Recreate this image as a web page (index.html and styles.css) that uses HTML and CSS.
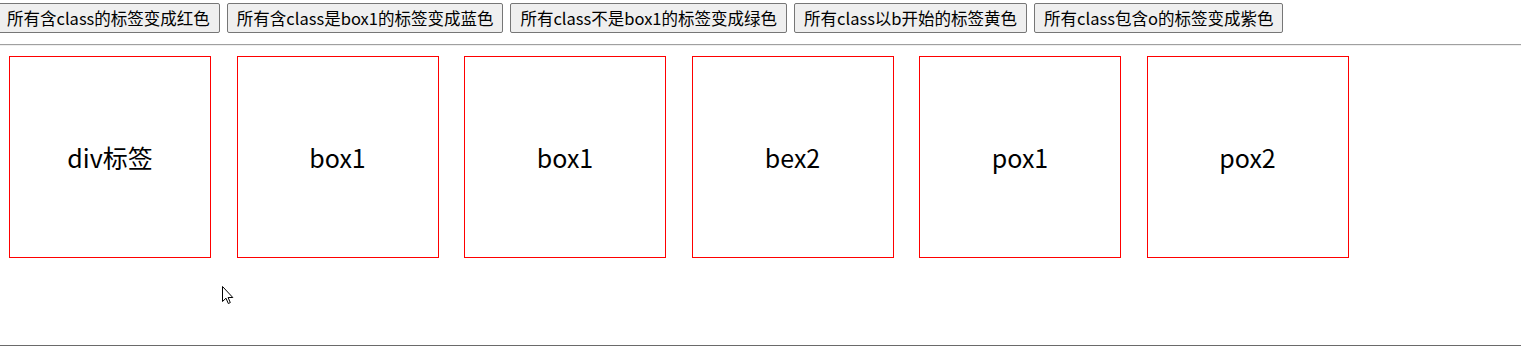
FILE: index.html
```html
<!DOCTYPE html>
<html lang="zh">
<head>
<meta charset="utf-8">
<title>选择器</title>
<link rel="stylesheet" href="styles.css">
</head>
<body>
<div class="page">
  <div class="toolbar">
    <button class="btn">所有含class的标签变成红色</button>
    <button class="btn">所有含class是box1的标签变成蓝色</button>
    <button class="btn">所有class不是box1的标签变成绿色</button>
    <button class="btn">所有class以b开始的标签黄色</button>
    <button class="btn">所有class包含o的标签变成紫色</button>
  </div>
  <hr class="rule">
  <div class="boxes">
    <div class="box">div标签</div>
    <div class="box box1">box1</div>
    <div class="box box1">box1</div>
    <div class="box bex2">bex2</div>
    <div class="box pox1">pox1</div>
    <div class="box pox2">pox2</div>
  </div>
  <div class="bottom-line"></div>
  <svg class="cursor" width="12" height="19" viewBox="0 0 12 19" xmlns="http://www.w3.org/2000/svg">
    <path d="M0.5 0.5 L0.5 15.5 L4 12.2 L6.3 17.5 L8.3 16.6 L6.1 11.5 L10.8 11.5 Z" fill="#fff" stroke="#000" stroke-width="1" stroke-linejoin="miter"/>
  </svg>
</div>
</body>
</html>
```
FILE: styles.css
```css
html, body {
  margin: 0;
  padding: 0;
  background: #fff;
}

.page {
  position: relative;
  width: 1521px;
  height: 346px;
  overflow: hidden;
  font-family: "Noto Sans CJK SC", "Noto Sans", sans-serif;
  color: #000;
}

.toolbar {
  display: flex;
  gap: 7px;
  padding-top: 3px;
  margin-left: -3px;
}

.btn {
  height: 30px;
  padding: 0 9px;
  font-family: "Noto Sans CJK SC", "Noto Sans", sans-serif;
  font-size: 16.5px;
  line-height: 28px;
  color: #000;
  background: #efefef;
  border: 1px solid #767676;
  border-radius: 2px;
  white-space: nowrap;
}

.rule {
  margin: 11px 0 0;
  height: 0;
  border: 0;
  border-top: 1px solid #a0a0a0;
  border-bottom: 1px solid #efefef;
}

.boxes {
  display: flex;
  gap: 25.5px;
  padding-left: 9px;
  margin-top: 10px;
}

.box {
  width: 200px;
  height: 200px;
  border: 1px solid #ff0000;
  display: flex;
  align-items: center;
  justify-content: center;
  font-size: 25px;
  line-height: 1;
  flex: none;
}

.bottom-line {
  position: absolute;
  left: 0;
  right: 0;
  bottom: 0;
  height: 1px;
  background: #6a6a6a;
}

.cursor {
  position: absolute;
  left: 222px;
  top: 286px;
}
```
